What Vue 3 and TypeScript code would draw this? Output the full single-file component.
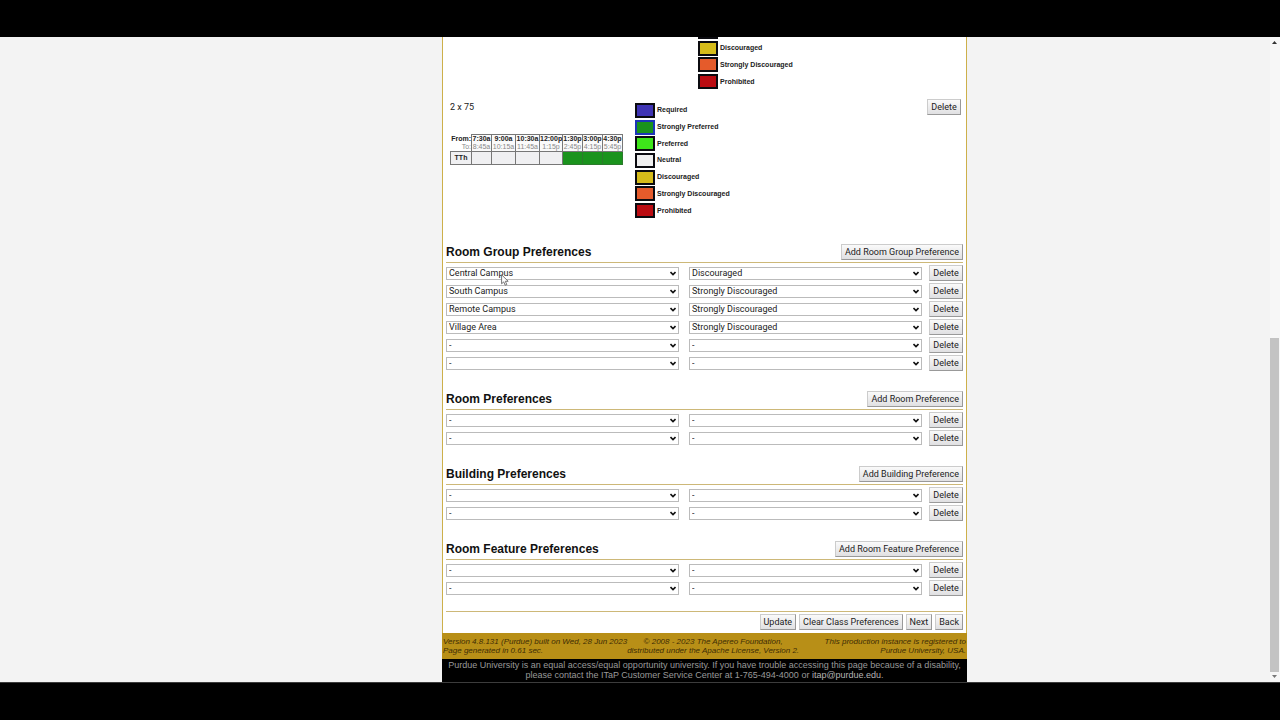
<script setup lang="ts">
import { ref } from 'vue'

interface Level {
  name: string
  tone: string
}

interface PreferenceRow {
  item: string
  level: string
}

interface Section {
  id: string
  title: string
  action: string
  rows: PreferenceRow[]
}

const levels: Level[] = [
  { name: 'Required', tone: 'required' },
  { name: 'Strongly Preferred', tone: 'strongly-preferred' },
  { name: 'Preferred', tone: 'preferred' },
  { name: 'Neutral', tone: 'neutral' },
  { name: 'Discouraged', tone: 'discouraged' },
  { name: 'Strongly Discouraged', tone: 'strongly-discouraged' },
  { name: 'Prohibited', tone: 'prohibited' },
]

const times = [
  { from: '7:30a', to: '8:45a', preferred: false },
  { from: '9:00a', to: '10:15a', preferred: false },
  { from: '10:30a', to: '11:45a', preferred: false },
  { from: '12:00p', to: '1:15p', preferred: false },
  { from: '1:30p', to: '2:45p', preferred: true },
  { from: '3:00p', to: '4:15p', preferred: true },
  { from: '4:30p', to: '5:45p', preferred: true },
]

const items = ['-', 'Central Campus', 'South Campus', 'Remote Campus', 'Village Area']
const levelNames = ['-', ...levels.map((l) => l.name)]
const blank = (): PreferenceRow => ({ item: '-', level: '-' })

const sections = ref<Section[]>([
  {
    id: 'group',
    title: 'Room Group Preferences',
    action: 'Add Room Group Preference',
    rows: [
      { item: 'Central Campus', level: 'Discouraged' },
      { item: 'South Campus', level: 'Strongly Discouraged' },
      { item: 'Remote Campus', level: 'Strongly Discouraged' },
      { item: 'Village Area', level: 'Strongly Discouraged' },
      blank(),
      blank(),
    ],
  },
  { id: 'room', title: 'Room Preferences', action: 'Add Room Preference', rows: [blank(), blank()] },
  { id: 'building', title: 'Building Preferences', action: 'Add Building Preference', rows: [blank(), blank()] },
  { id: 'feature', title: 'Room Feature Preferences', action: 'Add Room Feature Preference', rows: [blank(), blank()] },
])
</script>

<template>
  <div class="screen">
    <div class="view">
      <main class="page">
        <div class="body">
          <div class="previous">
            <ul class="legend short">
              <li><span class="swatch neutral"></span></li>
              <li v-for="l in levels.slice(4)" :key="l.name">
                <span class="swatch" :class="l.tone"></span>{{ l.name }}
              </li>
            </ul>
          </div>

          <section class="pattern">
            <div class="times">
              <p class="pattern-name">2 x 75</p>
              <table class="grid">
                <colgroup>
                  <col class="c21" />
                  <col class="c20" />
                  <col class="c24" span="2" />
                  <col class="c23" />
                  <col class="c20" span="3" />
                </colgroup>
                <thead>
                  <tr>
                    <th class="corner" scope="col">From:<span>To:</span></th>
                    <th v-for="t in times" :key="t.from" scope="col">{{ t.from }}<span>{{ t.to }}</span></th>
                  </tr>
                </thead>
                <tbody>
                  <tr>
                    <th scope="row">TTh</th>
                    <td v-for="t in times" :key="t.from" :class="{ on: t.preferred }"></td>
                  </tr>
                </tbody>
              </table>
            </div>
            <ul class="legend full">
              <li v-for="l in levels" :key="l.name">
                <span class="swatch" :class="[l.tone, { chosen: l.tone === 'strongly-preferred' }]"></span>{{ l.name }}
              </li>
            </ul>
            <button type="button" class="btn delete">Delete</button>
          </section>

          <section v-for="(s, si) in sections" :key="s.id" class="prefs">
            <header class="head">
              <h2>{{ s.title }}</h2>
              <button type="button" class="btn" @click="s.rows.push(blank())">{{ s.action }}</button>
            </header>
            <div v-for="(r, i) in s.rows" :key="i" class="row">
              <span class="pick item">
                <select v-model="r.item" :aria-label="s.title + ' ' + (i + 1)">
                  <option v-for="o in items" :key="o">{{ o }}</option>
                </select>
                <svg class="chevron" viewBox="0 0 6 5" aria-hidden="true"><path d="M.5 1 3 3.500 5.500 1" /></svg>
                <svg v-if="si === 0 && i === 0" class="pointer" viewBox="0 0 8 12" aria-hidden="true">
                  <path d="M.6.8v9l2.1-1.900 1.500 3.300 1.600-.7-1.500-3.200h2.900z" />
                </svg>
              </span>
              <span class="pick level">
                <select v-model="r.level" :aria-label="s.title + ' level ' + (i + 1)">
                  <option v-for="o in levelNames" :key="o">{{ o }}</option>
                </select>
                <svg class="chevron" viewBox="0 0 6 5" aria-hidden="true"><path d="M.5 1 3 3.500 5.500 1" /></svg>
              </span>
              <button type="button" class="btn delete" @click="s.rows.splice(i, 1)">Delete</button>
            </div>
          </section>

          <div class="actions">
            <button type="button" class="btn">Update</button>
            <button type="button" class="btn">Clear Class Preferences</button>
            <button type="button" class="btn">Next</button>
            <button type="button" class="btn">Back</button>
          </div>
        </div>

        <footer>
          <div class="version">
            <p>Version 4.8.131 (Purdue) built on Wed, 28 Jun 2023<br />Page generated in 0.61 sec.</p>
            <p class="middle">© 2008 - 2023 The Apereo Foundation,<br />distributed under the Apache License, Version 2.</p>
            <p class="registered">This production instance is registered to<br />Purdue University, USA.</p>
          </div>
          <p class="notice">
            Purdue University is an equal access/equal opportunity university. If you have trouble accessing this page because of a disability,<br />
            please contact the ITaP Customer Service Center at 1-765-494-4000 or <a href="mailto:itap@purdue.edu">itap@purdue.edu</a>.
          </p>
        </footer>
      </main>

      <div class="scrollbar" aria-hidden="true">
        <svg viewBox="0 0 10 10"><path d="M2 7h5L4.500 4z" fill="#333" /></svg>
        <div class="track"><div class="thumb"></div></div>
        <svg viewBox="0 0 10 10"><path d="M2 3h5L4.500 6z" fill="#777" /></svg>
      </div>
    </div>
  </div>
</template>

<style>
body {
  margin: 0;
  background: #000;
}
</style>

<style scoped>
* {
  box-sizing: border-box;
}
p,
h2,
ul {
  margin: 0;
  padding: 0;
}
.screen {
  height: 100vh;
  padding: 37px 0;
  background: #000;
  font-family: Roboto, 'Liberation Sans', Arial, sans-serif;
  font-size: 9px;
  line-height: 10px;
  color: #222;
}
.view {
  height: 100%;
  display: grid;
  grid-template-columns: 442fr minmax(525px, 525fr) 303fr 10px;
  background: #f3f3f3;
  border-bottom: 1px solid #3c3c3c;
  overflow: hidden;
}
.page {
  grid-column: 2;
  min-height: 0;
  display: flex;
  flex-direction: column;
}
.body {
  flex: 1;
  padding: 0 3px;
  background: #fff;
  border: solid #cdb04a;
  border-width: 0 1px;
}
.previous {
  height: 53px;
  overflow: hidden;
  display: flex;
  align-items: flex-end;
  padding-left: 252px;
}
.legend {
  list-style: none;
  display: grid;
  grid-auto-rows: 1fr;
  flex: none;
  font-family: 'Liberation Sans', Arial, sans-serif;
  font-size: 7px;
  font-weight: bold;
  line-height: 8px;
}
.legend.short {
  height: 67px;
}
.legend.full {
  height: 117px;
  margin-top: 3px;
}
.legend li {
  display: flex;
  align-items: center;
  gap: 2px;
}
.swatch {
  width: 20px;
  height: 15px;
  border: 2px solid #0b0b10;
}
.required { background: #3f34b4; }
.strongly-preferred { background: #1a931d; }
.preferred { background: #3ee51a; }
.neutral { background: #efefef; }
.discouraged { background: #d6bc1a; }
.strongly-discouraged { background: #e55b2b; }
.prohibited { background: #bb0c12; }
.chosen { border-color: #1c35b8; }

.pattern {
  display: flex;
  align-items: flex-start;
  padding: 9px 2px 25px 4px;
}
.times {
  width: 185px;
  padding-top: 3px;
}
.grid {
  width: 172px;
  table-layout: fixed;
  margin-top: 22px;
  border-collapse: collapse;
  font-family: 'Liberation Sans', Arial, sans-serif;
  font-size: 7px;
  line-height: 8px;
  white-space: nowrap;
}
.c20 { width: 20px; }
.c21 { width: 21px; }
.c23 { width: 23px; }
.c24 { width: 24px; }
.grid th,
.grid td {
  padding: 0;
  border: 1px solid #777;
  text-align: center;
  height: 13px;
}
.grid thead th:not(.corner) {
  background: #fafafa;
}
.grid th span {
  display: block;
  font-weight: normal;
  color: #888;
}
.grid .corner {
  border-color: transparent #777 #777 transparent;
  text-align: right;
}
.grid tbody th,
.grid td {
  background: #f0f0f2;
}
.grid td.on {
  background: #1a931d;
  border-color: #2c7a2c;
}
.btn {
  height: 16px;
  padding: 0 3px;
  font: inherit;
  line-height: 12px;
  color: #222;
  white-space: nowrap;
  background: linear-gradient(#fafafa, #e0e0e2);
  border: 1px solid #ccc;
  border-right-color: #999;
  border-bottom-color: #999;
}
.delete {
  width: 34px;
  padding: 0;
}
.pattern .delete {
  margin-left: auto;
}
.prefs {
  margin-bottom: 19px;
}
.head {
  height: 19px;
  display: flex;
  justify-content: space-between;
  border-bottom: 1px solid #cdb878;
  margin-bottom: 1px;
}
.head h2 {
  font-family: 'Liberation Sans', Arial, sans-serif;
  font-size: 12px;
  line-height: 16px;
  color: #111;
}
.row {
  height: 18px;
  display: grid;
  grid-template-columns: 1fr 10px 1fr 7px 34px;
  align-items: center;
}
.pick {
  position: relative;
  height: 13px;
}
.level {
  grid-column: 3;
}
.row .delete {
  grid-column: 5;
}
.pick select {
  display: block;
  appearance: none;
  width: 100%;
  height: 13px;
  padding: 0 2px;
  margin: 0;
  font: inherit;
  color: #222;
  background: #fff;
  border: 1px solid #bbb;
  border-radius: 0;
}
.chevron {
  position: absolute;
  right: 3px;
  top: 4px;
  width: 6px;
  height: 5px;
  fill: none;
  stroke: #111;
  stroke-width: 1.6;
  pointer-events: none;
}
.pointer {
  position: absolute;
  left: 55px;
  top: 7px;
  z-index: 1;
  width: 8px;
  height: 12px;
  fill: #fff;
  stroke: #666;
  stroke-width: 0.9;
  pointer-events: none;
}
.actions {
  display: flex;
  justify-content: flex-end;
  gap: 3px;
  margin-top: -5px;
  padding: 2px 0 3px;
  border-top: 1px solid #cdb878;
}
.version {
  display: flex;
  padding: 4px 1px;
  height: 26px;
  background: #b88f17;
  color: #3d2c05;
  font-family: 'Liberation Sans', Arial, sans-serif;
  font-size: 8px;
  font-style: italic;
  line-height: 9px;
  white-space: nowrap;
}
.middle {
  text-align: center;
}
.registered {
  margin-left: auto;
  text-align: right;
}
.notice {
  height: 23px;
  padding-top: 1px;
  background: #000;
  color: #999;
  font-family: 'Liberation Sans', Arial, sans-serif;
  text-align: center;
  white-space: nowrap;
}
.notice a {
  color: #b5b5b5;
  text-decoration: none;
}
.scrollbar {
  grid-column: 4;
  display: flex;
  flex-direction: column;
  min-height: 0;
  background: #f7f7f7;
}
.scrollbar svg {
  width: 10px;
  height: 10px;
}
.track {
  flex: 1;
  display: flex;
  flex-direction: column;
  justify-content: flex-end;
}
.thumb {
  height: 53.5%;
  width: 9px;
  background: #c3c3c3;
}
</style>
